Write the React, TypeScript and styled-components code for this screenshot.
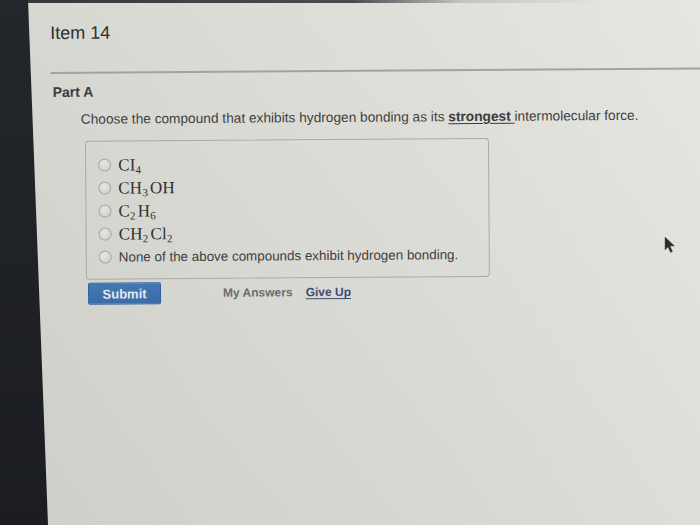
import React from "react";
import styled, { createGlobalStyle } from "styled-components";

const GlobalStyle = createGlobalStyle`
  html, body { margin: 0; padding: 0; }
  body {
    width: 700px;
    height: 525px;
    overflow: hidden;
    background: #dcdcd6;
    font-family: "Liberation Sans", Arial, sans-serif;
  }
`;

const Screen = styled.div`
  position: relative;
  display: flex;
  width: 700px;
  height: 525px;
  overflow: hidden;
  background:
    linear-gradient(180deg, rgba(255,255,255,0.05) 0%, rgba(0,0,0,0.03) 100%),
    linear-gradient(90deg, #d4d5ce 0%, #dadad4 30%, #dfdfd9 65%, #e5e5e0 100%);
`;

const Bezel = styled.div`
  flex: 0 0 48px;
  background: linear-gradient(180deg, #23262b 0%, #1b1d21 100%);
  clip-path: polygon(0 0, 28px 0, 48px 100%, 0 100%);
`;

const Display = styled.div`
  flex: 1;
  display: flex;
  flex-direction: column;
  position: relative;
`;

const TopEdge = styled.div`
  height: 3px;
  margin-left: -20px;
  background: linear-gradient(90deg, #35373b 0%, #4a4c50 45%, rgba(150,150,150,0.4) 60%, rgba(200,200,200,0) 80%);
`;

const Content = styled.div`
  display: flex;
  flex-direction: column;
  transform: rotate(-0.4deg);
  transform-origin: 0 0;
`;

const ItemTitle = styled.h1`
  margin: 19px 0 0 2px;
  font-size: 18px;
  line-height: 22px;
  font-weight: normal;
  color: #2e2f31;
`;

const Rule = styled.hr`
  margin: 28px 0 0 2px;
  width: 700px;
  border: 0;
  height: 2px;
  background: #a2a3a0;
`;

const PartTitle = styled.h2`
  margin: 10px 0 0 4px;
  font-size: 14px;
  line-height: 17px;
  font-weight: bold;
  color: #3a3b3d;
`;

const Question = styled.p`
  margin: 11px 0 0 32px;
  font-size: 13.7px;
  line-height: 16px;
  color: #3f4042;
`;

const Strong = styled.strong`
  text-decoration: underline;
  text-underline-offset: 2px;
  color: #3a3b3d;
`;

const ChoiceBox = styled.div`
  margin: 13px 0 0 36px;
  width: 404px;
  height: 139px;
  box-sizing: border-box;
  border: 1px solid #a9aaa6;
  border-radius: 4px;
  padding: 12px 0 0 12px;
  display: flex;
  flex-direction: column;
`;

const Choice = styled.label`
  display: flex;
  align-items: center;
  height: 23px;
  gap: 7px;
`;

const Radio = styled.span`
  flex: 0 0 13px;
  width: 13px;
  height: 13px;
  box-sizing: border-box;
  border-radius: 50%;
  border: 1px solid #a9aaa6;
  background: radial-gradient(circle at 40% 35%, #e6e6e2 0%, #d3d4d0 70%, #c8c9c5 100%);
`;

const Formula = styled.span`
  font-family: "Liberation Serif", "Times New Roman", serif;
  font-size: 17px;
  color: #2f3032;
  letter-spacing: 0.2px;
`;

const Sub = styled.sub`
  font-size: 11px;
  vertical-align: -3px;
  line-height: 0;
  margin-right: 2px;
`;

const ChoiceText = styled.span`
  font-size: 13.4px;
  color: #3f4042;
`;

const Actions = styled.div`
  margin: 3px 0 0 38px;
  display: flex;
  align-items: center;
`;

const SubmitButton = styled.button`
  width: 73px;
  height: 22px;
  border: 1px solid #2f5f96;
  border-radius: 2px;
  background: linear-gradient(180deg, #4478b4 0%, #3a6ca6 100%);
  color: #e4e8ee;
  font-family: "Liberation Sans", Arial, sans-serif;
  font-weight: bold;
  font-size: 13px;
  padding: 0;
`;

const Link = styled.span<{ $underline?: boolean }>`
  font-size: 12px;
  font-weight: bold;
  color: ${(p) => (p.$underline ? "#3e4c72" : "#6a6b6d")};
  text-decoration: ${(p) => (p.$underline ? "underline" : "none")};
  text-underline-offset: 2px;
  margin-left: ${(p) => (p.$underline ? "13px" : "62px")};
`;

const Cursor = styled.svg`
  position: absolute;
  left: 664px;
  top: 236px;
`;

const choices: { parts: [string, string?][] }[] = [
  { parts: [["CI", "4"]] },
  { parts: [["CH", "3"], ["OH"]] },
  { parts: [["C", "2"], ["H", "6"]] },
  { parts: [["CH", "2"], ["Cl", "2"]] },
];

export default function App() {
  return (
    <>
      <GlobalStyle />
      <Screen>
        <Bezel />
        <Display>
          <TopEdge />
          <Content>
            <ItemTitle>Item 14</ItemTitle>
            <Rule />
            <PartTitle>Part A</PartTitle>
            <Question>
              Choose the compound that exhibits hydrogen bonding as its <Strong>strongest </Strong>intermolecular force.
            </Question>
            <ChoiceBox>
              {choices.map((c, i) => (
                <Choice key={i}>
                  <Radio />
                  <Formula>
                    {c.parts.map(([b, s], j) => (
                      <React.Fragment key={j}>
                        {b}
                        {s && <Sub>{s}</Sub>}
                      </React.Fragment>
                    ))}
                  </Formula>
                </Choice>
              ))}
              <Choice>
                <Radio />
                <ChoiceText>None of the above compounds exhibit hydrogen bonding.</ChoiceText>
              </Choice>
            </ChoiceBox>
            <Actions>
              <SubmitButton>Submit</SubmitButton>
              <Link>My Answers</Link>
              <Link $underline>Give Up</Link>
            </Actions>
          </Content>
        </Display>
        <Cursor width="12" height="18" viewBox="0 0 12 18">
          <path d="M1 1 L1 14 L4 11 L6.5 16.5 L8.5 15.5 L6 10 L10.5 10 Z" fill="#2a2b2d" stroke="#555" strokeWidth="0.5" />
        </Cursor>
      </Screen>
    </>
  );
}
